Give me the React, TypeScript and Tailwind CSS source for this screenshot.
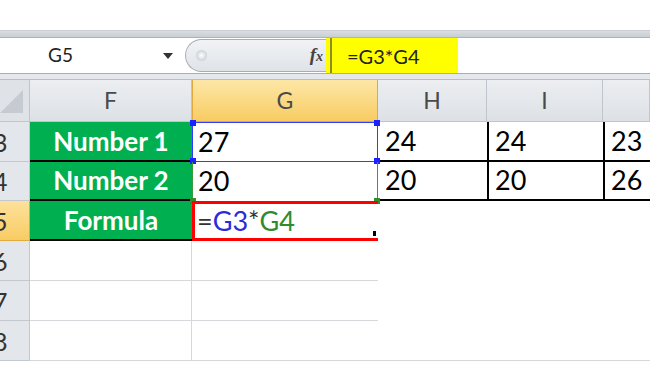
const font = "font-['Lato','Open_Sans',sans-serif]";

const headerCls =
  "flex items-center justify-center bg-linear-to-b from-[#eceef1] to-[#dde1e6] border-r border-b border-[#bfc5cc] text-[23px] text-[#4a4a4a]";

const numCls = "flex items-center text-[27px] text-black";
const greenCls =
  "flex items-center justify-center border-b-2 border-black bg-[#00b050] text-[26px] font-bold text-white";

function RowHead({ n, active }: { n: number; active?: boolean }) {
  return (
    <div
      className={
        "relative overflow-hidden border-r border-b " +
        (active
          ? "bg-linear-to-b from-[#fde19a] to-[#f8cc62] border-[#e2a93c]"
          : "bg-[#e3e7ec] border-[#c3c8ce]")
      }
    >
      <span className="absolute left-[-7px] top-1/2 -translate-y-1/2 text-[25px] leading-none text-[#333]">
        {n}
      </span>
    </div>
  );
}

function Handle({ className }: { className: string }) {
  return <span className={"absolute h-[6px] w-[6px] " + className} />;
}

export default function App() {
  return (
    <div className={`h-[365px] w-[650px] overflow-hidden bg-white ${font}`}>
      {/* top strip */}
      <div className="h-[30px]" />
      <div className="h-[8px] border-t border-[#c9cdd3] bg-linear-to-b from-[#d9dde2] to-[#c9ced4] border-b border-b-[#aeb3ba]" />

      {/* formula bar */}
      <div className="flex h-[35px] items-stretch bg-white">
        <div className="flex w-[185px] items-center">
          <span className="ml-[48px] text-[19px] text-[#222]">G5</span>
          <svg className="ml-auto mr-[12px]" width="10" height="6" viewBox="0 0 10 6">
            <path d="M0 0 H10 L5 6 Z" fill="#333" />
          </svg>
        </div>
        <div className="my-[1px] flex w-[141px] items-center rounded-l-full border border-r-0 border-[#a7adb5] bg-linear-to-b from-[#f1f3f5] to-[#dfe3e8]">
          <span className="ml-[10px] h-[11px] w-[11px] rounded-full bg-radial from-[#ffffff] to-[#b9bfc7]" />
          <span className="ml-auto mr-[3px] font-['Liberation_Serif',serif] text-[19px] font-bold italic text-[#444]">
            f<span className="text-[14px]">x</span>
          </span>
        </div>
        <div className="flex w-[132px] items-center bg-[#ffff00] pl-[4px]">
          <span className="h-full w-[2px] bg-[#8d8d30]" />
          <span className="ml-[15px] text-[20px] text-[#222]">=G3*G4</span>
        </div>
        <div className="flex-1" />
      </div>
      <div className="h-[7px] border-t border-[#a9aeb5] bg-[#e4e7eb] border-b border-b-[#b9bec5]" />

      {/* sheet */}
      <div className="grid grid-cols-[30px_162px_186px_109px_116px_1fr] grid-rows-[42px_40px_39px_40px_40px_40px_40px]">
        {/* header row */}
        <div className="relative border-r border-b border-[#bfc5cc] bg-[#dfe3e8]">
          <svg className="absolute left-0 top-[10px]" width="23" height="23" viewBox="0 0 23 23">
            <path d="M23 0 V23 H0 Z" fill="#c6cbd2" />
          </svg>
        </div>
        <div className={headerCls}>F</div>
        <div className="flex items-center justify-center border-x border-b border-[#e2a93c] bg-linear-to-b from-[#fde7a6] to-[#f8cc60] text-[23px] text-[#4a4a4a]">
          G
        </div>
        <div className={headerCls}>H</div>
        <div className={headerCls}>I</div>
        <div className={headerCls}></div>

        {/* row 3 */}
        <RowHead n={3} />
        <div className={greenCls}>Number 1</div>
        <div className={`relative border border-[#2f3cff] pl-[5px] ${numCls}`}>
          27
          <Handle className="left-[-3px] top-[-3px] bg-[#1b22ff]" />
          <Handle className="right-[-3px] top-[-3px] bg-[#1b22ff]" />
          <Handle className="bottom-[-3px] left-[-3px] bg-[#1b22ff]" />
          <Handle className="bottom-[-3px] right-[-3px] bg-[#1b22ff]" />
        </div>
        <div className={`border-b-2 border-black pl-[7px] ${numCls}`}>24</div>
        <div className={`border-b-2 border-l-2 border-black pl-[6px] ${numCls}`}>24</div>
        <div className={`border-b-2 border-l-2 border-black pl-[6px] ${numCls}`}>23</div>

        {/* row 4 */}
        <RowHead n={4} />
        <div className={greenCls}>Number 2</div>
        <div className={`relative border-x border-[#3b9a3b] pl-[5px] ${numCls}`}>
          20
          <Handle className="bottom-[-3px] left-[-3px] bg-[#2f8f2f]" />
          <Handle className="bottom-[-3px] right-[-3px] bg-[#2f8f2f]" />
        </div>
        <div className={`border-b-2 border-black pl-[7px] ${numCls}`}>20</div>
        <div className={`border-b-2 border-l-2 border-black pl-[6px] ${numCls}`}>20</div>
        <div className={`border-b-2 border-l-2 border-black pl-[6px] ${numCls}`}>26</div>

        {/* row 5 */}
        <RowHead n={5} active />
        <div className={greenCls}>Formula</div>
        <div className="relative flex items-center border-y-[3px] border-l-[3px] border-[#ff0000] pl-[2px] text-[27px]">
          <span className="text-[#333]">=</span>
          <span className="text-[#2b2bd9]">G3</span>
          <span className="text-[#333]">*</span>
          <span className="text-[#2e8b2e]">G4</span>
          <span className="absolute bottom-[2px] right-[2px] h-[5px] w-[3px] bg-black" />
        </div>
        <div />
        <div />
        <div />

        {/* rows 6-8 */}
        {[6, 7, 8].map((n) => (
          <div key={n} className="contents">
            <RowHead n={n} />
            <div className="border-r border-b border-[#d6d8db]" />
            <div className="border-b border-[#d6d8db]" />
            <div className={n === 8 ? "border-b border-[#d6d8db]" : ""} />
            <div className={n === 8 ? "border-b border-[#d6d8db]" : ""} />
            <div className={n === 8 ? "border-b border-[#d6d8db]" : ""} />
          </div>
        ))}
      </div>
    </div>
  );
}
